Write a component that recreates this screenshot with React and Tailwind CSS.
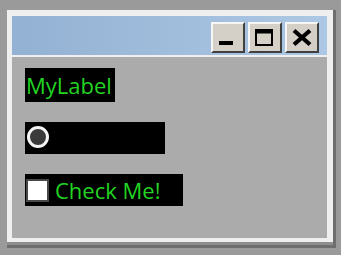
export default function App() {
  const font = { fontFamily: '"Open Sans", "Noto Sans", sans-serif' };
  const btn =
    "w-[34px] h-[31px] bg-[#d4d0c8] border-t-2 border-l-2 border-t-[#f6f6f6] border-l-[#f6f6f6] border-b-2 border-r-2 border-b-[#404040] border-r-[#404040] flex items-center justify-center";
  return (
    <div className="w-[341px] h-[255px] bg-[#9a9a9a] pt-[10px] pl-[7px]" style={font}>
      <div className="w-[329px] h-[238px] border-r-[3px] border-b-[3px] border-[#6e6e6e]">
        <div className="h-full bg-[#efefef] border-b-[3px] border-[#8e8e8e] pt-[6px] pl-[5px] pr-[6px] pb-[4px] flex flex-col gap-[2px]">
          <div className="h-[39px] bg-gradient-to-r from-[#93b1d3] to-[#adc8e4] flex justify-end items-start pt-[6px] pr-[8px] gap-[3px]">
            <div className={btn}>
              <svg width="30" height="27" viewBox="0 0 30 27">
                <rect x="6" y="17" width="14" height="4" fill="#000" />
              </svg>
            </div>
            <div className={btn}>
              <svg width="30" height="27" viewBox="0 0 30 27">
                <rect x="6" y="6" width="16" height="15" fill="none" stroke="#000" strokeWidth="2" />
                <rect x="6" y="6" width="16" height="3.5" fill="#000" />
              </svg>
            </div>
            <div className={btn}>
              <svg width="30" height="27" viewBox="0 0 30 27">
                <path d="M7 6.5 L23 20.5 M23 6.5 L7 20.5" stroke="#000" strokeWidth="4.2" />
              </svg>
            </div>
          </div>
          <div className="flex-1 bg-[#ababab] pl-[13px] pt-[11px] flex flex-col items-start gap-[20px]">
            <div className="w-[90px] h-[34px] bg-black text-[#22d422] text-[22px] leading-none flex items-center pl-[1px]">
              MyLabel
            </div>
            <div className="w-[140px] h-[32px] bg-black flex items-center pl-[2px]">
              <div className="w-[22px] h-[22px] rounded-full border-[3.5px] border-[#f4f4f4] bg-[#3a3a3a] -translate-y-[1px]" />
            </div>
            <div className="w-[158px] h-[32px] bg-black flex items-center pl-[1px] gap-[6px]">
              <div className="w-[23px] h-[23px] bg-white border-2 border-[#484848]" />
              <span className="text-[#22d422] text-[22px] leading-none">Check Me!</span>
            </div>
          </div>
        </div>
      </div>
    </div>
  );
}
